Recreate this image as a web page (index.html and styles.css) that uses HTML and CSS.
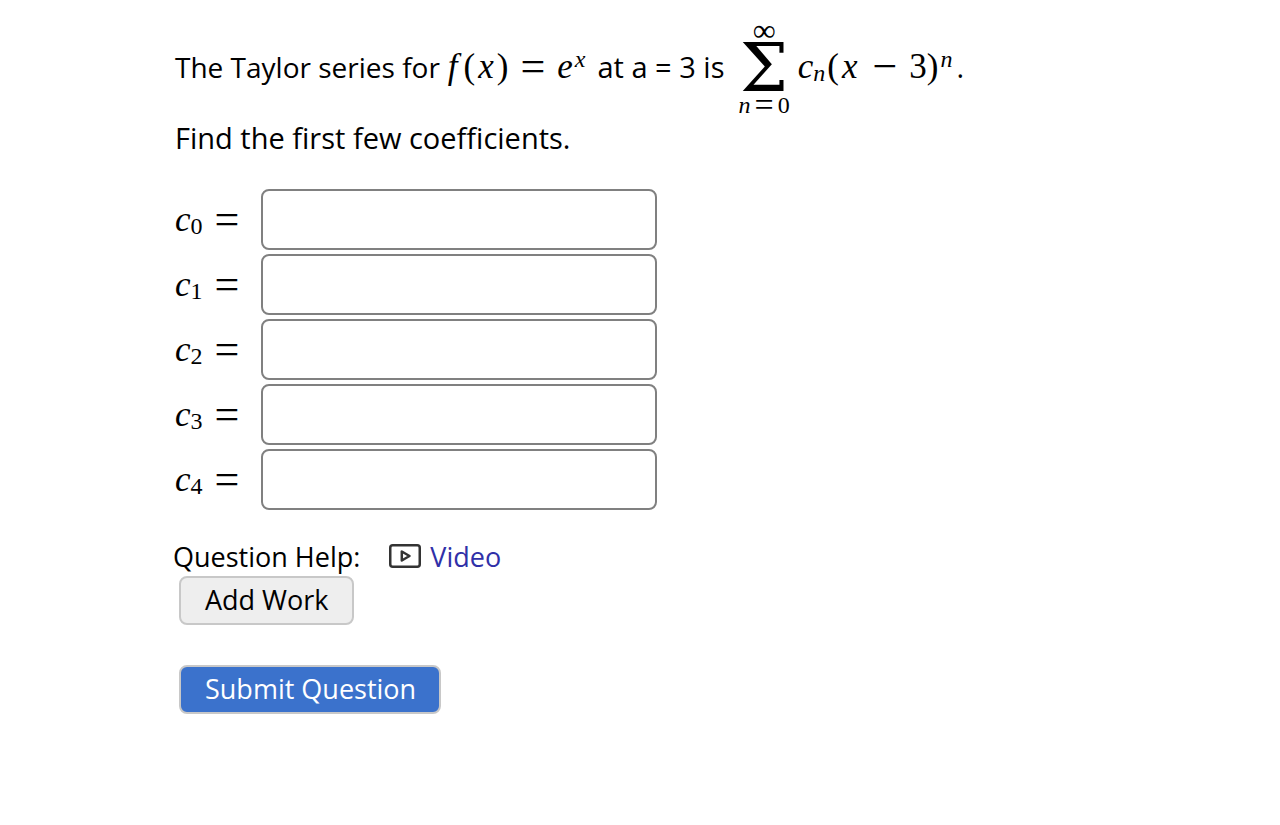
FILE: index.html
```html
<!DOCTYPE html>
<html lang="en">
<head>
<meta charset="utf-8">
<meta name="viewport" content="width=device-width, initial-scale=1">
<title>Taylor series coefficients</title>
<link rel="stylesheet" href="styles.css">
</head>
<body>
<main class="question">
  <div class="statement">
    <span class="lead">The Taylor series for</span>
    <span class="math formula"><i class="fn">f</i><span>(</span><i class="var">x</i><span>)</span><span class="rel">=</span><i>e</i><i class="sup">x</i></span>
    <span>at a = 3 is</span>
    <span class="math sum"><span class="limit upper">∞</span><span class="sigma">Σ</span><span class="limit lower"><i>n</i><span class="limit-rel">=</span><span>0</span></span></span>
    <span class="math formula term"><i>c</i><i class="sub">n</i><span class="open">(</span><i class="var">x</i><span class="rel">−</span><span>3</span><span>)</span><i class="sup">n</i></span><span class="stop">.</span>
  </div>
  <p class="prompt">Find the first few coefficients.</p>
  <form class="answers">
    <div class="row"><label class="math" for="c0"><i>c</i><span class="sub">0</span><span class="rel">=</span></label><input id="c0" type="text"></div>
    <div class="row"><label class="math" for="c1"><i>c</i><span class="sub">1</span><span class="rel">=</span></label><input id="c1" type="text"></div>
    <div class="row"><label class="math" for="c2"><i>c</i><span class="sub">2</span><span class="rel">=</span></label><input id="c2" type="text"></div>
    <div class="row"><label class="math" for="c3"><i>c</i><span class="sub">3</span><span class="rel">=</span></label><input id="c3" type="text"></div>
    <div class="row"><label class="math" for="c4"><i>c</i><span class="sub">4</span><span class="rel">=</span></label><input id="c4" type="text"></div>
  </form>
  <div class="help">
    <span>Question Help:</span>
    <svg class="video-icon" viewBox="0 0 32 24" aria-hidden="true"><rect x="1.25" y="1.25" width="29.5" height="21.5" rx="2.5"/><path d="M12.8 7.5v9l7.7-4.5z"/></svg>
    <a href="#">Video</a>
  </div>
  <div class="actions">
    <button type="button" class="button">Add Work</button>
    <button type="button" class="button primary">Submit Question</button>
  </div>
</main>
</body>
</html>
```
FILE: styles.css
```css
body {
  margin: 0;
  background: #fff;
  color: #000;
  font-family: "Trebuchet MS", "Open Sans", sans-serif;
  font-size: 29px;
  line-height: 40px;
}
.question { padding: 16px 24px 24px 175px; }
.statement { display: flex; align-items: center; white-space: nowrap; }
.lead { font-size: 28px; }
.math { font-family: "Liberation Serif", serif; font-size: 35px; }
.formula { display: flex; align-items: baseline; height: 40px; margin: 0 12px 0 4px; }
.term { margin: 0 4px 0 8px; }
.fn { padding: 0 6px 0 4px; }
.var { padding: 0 3px; }
.rel { align-self: center; padding: 0 12px; font-size: 44px; }
.sup, .sub { font-size: 24px; line-height: 24px; }
.sup { align-self: flex-start; padding-left: 2px; }
.sub { position: relative; top: 3px; }
.open { padding-left: 2px; }
.sum { display: flex; flex-direction: column; align-items: center; margin-left: 14px; }
.limit { display: flex; font-size: 24px; line-height: 26px; }
.limit-rel { padding: 0 4px; font-size: 34px; }
.upper { font-size: 32px; line-height: 28px; }
.sigma { font-family: "DejaVu Serif", serif; font-size: 68px; line-height: 48px; }
.prompt { margin: 0 0 31px; }
.answers { display: flex; flex-direction: column; gap: 4px; }
.row { display: flex; align-items: center; }
.row label { display: flex; align-items: baseline; width: 86px; height: 40px; }
.row input {
  box-sizing: border-box;
  width: 396px;
  height: 61px;
  padding: 8px 12px;
  border: 2px solid #808080;
  border-radius: 8px;
  background: #fff;
  font: inherit;
}
.help, .actions { margin-left: -2px; font-size: 27px; }
.help { display: flex; align-items: center; margin-top: 27px; line-height: 39px; }
.video-icon { width: 32px; height: 24px; margin: 0 9px 2px 29px; fill: none; stroke: #333; stroke-width: 2.5; stroke-linejoin: round; }
a { color: #3030a8; text-decoration: none; }
.actions { display: flex; flex-direction: column; align-items: flex-start; gap: 40px; padding-left: 6px; }
.button {
  padding: 2px 23px 3px 24px;
  border: 2px solid #c8c8c8;
  border-radius: 8px;
  background: #eee;
  color: #000;
  font: inherit;
}
.primary { background: #3b72cc; color: #fff; }
```
